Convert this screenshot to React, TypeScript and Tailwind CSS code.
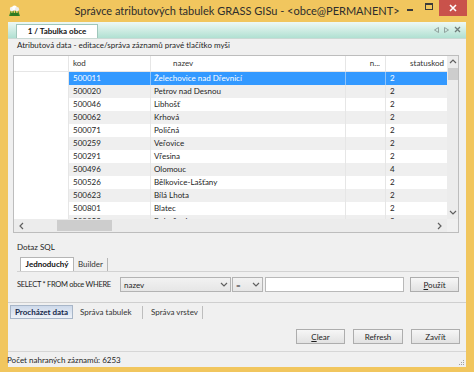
import React from "react";

const rows: [string, string, string][] = [
  ["500011", "Želechovice nad Dřevnicí", "2"],
  ["500020", "Petrov nad Desnou", "2"],
  ["500046", "Libhošť", "2"],
  ["500062", "Krhová", "2"],
  ["500071", "Poličná", "2"],
  ["500259", "Veřovice", "2"],
  ["500291", "Vřesina", "2"],
  ["500496", "Olomouc", "4"],
  ["500526", "Bělkovice-Lašťany", "2"],
  ["500623", "Bílá Lhota", "2"],
  ["500801", "Blatec", "2"],
  ["500852", "Bohuňovice", "2"],
];

function Chevron({ dir, className }: { dir: "up" | "down" | "left" | "right"; className?: string }) {
  const pts: Record<string, string> = {
    up: "1,5 4,2 7,5",
    down: "1,2 4,5 7,2",
    left: "5,1 2,4 5,7",
    right: "3,1 6,4 3,7",
  };
  return (
    <svg width="8" height="8" viewBox="0 0 8 8" className={className}>
      <polyline points={pts[dir]} fill="none" stroke="#606060" strokeWidth="1.2" />
    </svg>
  );
}

function GrassIcon() {
  return (
    <svg width="13" height="12" viewBox="0 0 13 12">
      <path d="M1 11 L3 5 L4 11 L5 3 L6.5 11 L7.5 4 L9 11 L10 5 L12 11 Z" fill="#3f8f2c" />
      <circle cx="4" cy="4" r="2.2" fill="#f4f4f4" />
      <circle cx="6.5" cy="3" r="2.4" fill="#ffffff" />
      <circle cx="9" cy="4.2" r="2.1" fill="#eeeeee" />
      <path d="M2 11 L11 11 L10 8 L3 8 Z" fill="#2f7a22" />
    </svg>
  );
}

function Btn({ children, w }: { children: React.ReactNode; w: string }) {
  return (
    <div
      className={`${w} h-[15px] bg-linear-to-b from-[#f6f6f6] to-[#e2e2e2] border border-[#adadad] flex items-center justify-center text-[#1e1e1e]`}
    >
      {children}
    </div>
  );
}

export default function App() {
  return (
    <div className="w-[474px] h-[372px] bg-[#f1c65e] flex flex-col font-['Lato',sans-serif] text-[8px] text-[#1e1e1e] overflow-hidden">
      {/* Title bar */}
      <div className="h-[22px] shrink-0 grid grid-cols-[1fr_auto_1fr]">
        <div className="pl-[8px] pt-[5px]">
          <GrassIcon />
        </div>
        <div className="text-[11px] leading-[22px] text-[#2d2d2d] whitespace-nowrap">
          Správce atributových tabulek GRASS GISu - &lt;obce@PERMANENT&gt;
        </div>
        <div className="flex justify-end items-start pr-[7px]">
          <div className="w-[17px] h-[16px] flex items-center justify-center">
            <div className="w-[6px] h-[2px] bg-[#3a3a3a] mt-[4px]" />
          </div>
          <div className="w-[21px] h-[16px] flex items-center justify-center">
            <div className="w-[8px] h-[7px] border border-[#3a3a3a] border-t-2 -mt-[3px]" />
          </div>
          <div className="w-[28px] h-[16px] bg-[#c9524b] flex items-center justify-center">
            <svg width="8" height="8" viewBox="0 0 8 8">
              <path d="M1 1 L7 7 M7 1 L1 7" stroke="#ffffff" strokeWidth="1.6" />
            </svg>
          </div>
        </div>
      </div>

      {/* Client area */}
      <div className="mx-[8px] h-[345px] shrink-0 bg-[#f0f0f0] flex flex-col">
        {/* top notebook tab bar */}
        <div className="h-[16px] shrink-0 bg-linear-to-b from-[#eef8f5] to-[#b0e0d2] flex items-end justify-between pl-[8px] pr-[5px]">
          <div className="w-[82px] h-[14px] bg-white border-x border-t border-[#9fc6bb] font-bold text-center leading-[13px] text-[#111]">
            1 / Tabulka obce
          </div>
          <div className="self-center flex items-center gap-[5px] pb-[1px]">
            <svg width="5" height="6" viewBox="0 0 5 6">
              <polygon points="4.5,0.5 0.5,3 4.5,5.5" fill="none" stroke="#8a9a96" strokeWidth="0.9" />
            </svg>
            <svg width="5" height="6" viewBox="0 0 5 6">
              <polygon points="0.5,0.5 4.5,3 0.5,5.5" fill="none" stroke="#8a9a96" strokeWidth="0.9" />
            </svg>
            <svg width="7" height="7" viewBox="0 0 7 7">
              <path d="M1 1 L6 6 M6 1 L1 6" stroke="#6f7d7a" strokeWidth="1.3" />
            </svg>
          </div>
        </div>

        {/* page */}
        <div className="h-[265px] shrink-0 flex flex-col border-t border-[#c9d9d4] border-b border-b-[#cfcfcf]">
          <div className="h-[16px] shrink-0 pl-[9px] leading-[13px] whitespace-nowrap">
            Atributová data - editace/správa záznamů pravé tlačítko myši
          </div>

          {/* table */}
          <div className="ml-[5px] mr-[7px] h-[178px] shrink-0 border border-[#bdbdbd] bg-white flex flex-col">
            <div className="flex h-[163px] shrink-0">
              <div className="w-[433px] flex flex-col overflow-hidden">
                <div className="grid grid-cols-[54px_82px_195px_40px_62px] h-[16px] shrink-0 border-b border-[#e6e6e6] text-[#333] leading-[15px]">
                  <div />
                  <div className="border-l border-[#e6e6e6] pl-[4px]">kod</div>
                  <div className="border-l border-[#e6e6e6] pl-[22px]">nazev</div>
                  <div className="border-l border-[#e6e6e6] pr-[5px] text-right">n...</div>
                  <div className="border-l border-[#e6e6e6] pr-[3px] text-right">statuskod</div>
                </div>
                {rows.map((r, i) => {
                  const sel = i === 0;
                  const bg = sel ? "bg-[#3399ff] text-white" : i % 2 === 1 ? "bg-[#efefef]" : "bg-white";
                  const bd = sel ? "border-[#8fc4fa]" : "border-[#e6e6e6]";
                  return (
                    <div
                      key={r[0]}
                      className="grid grid-cols-[54px_82px_195px_40px_62px] h-[13px] shrink-0 leading-[13px] whitespace-nowrap"
                    >
                      <div className="bg-white" />
                      <div className={`${bg} border-l border-[#e6e6e6] pl-[4px]`}>{r[0]}</div>
                      <div className={`${bg} border-l ${bd} pl-[3px] overflow-hidden`}>{r[1]}</div>
                      <div className={`${bg} border-l ${bd}`} />
                      <div className={`${bg} border-l ${bd} pl-[4px]`}>{r[2]}</div>
                    </div>
                  );
                })}
              </div>
              {/* vertical scrollbar */}
              <div className="w-[11px] bg-[#ececec] flex flex-col items-center">
                <div className="h-[12px] flex items-center justify-center">
                  <Chevron dir="up" />
                </div>
                <div className="w-[10px] h-[12px] bg-[#cdcdcd]" />
                <div className="flex-1" />
                <div className="h-[12px] flex items-center justify-center">
                  <Chevron dir="down" />
                </div>
              </div>
            </div>
            {/* horizontal scrollbar */}
            <div className="h-[13px] shrink-0 flex">
              <div className="w-[433px] bg-[#ececec] flex items-center">
                <div className="w-[12px] flex justify-center ml-[2px]">
                  <Chevron dir="left" />
                </div>
                <div className="ml-[29px] w-[55px] h-[11px] bg-[#cdcdcd]" />
                <div className="flex-1" />
                <div className="w-[12px] flex justify-center mr-[2px]">
                  <Chevron dir="right" />
                </div>
              </div>
              <div className="w-[11px] bg-[#f0f0f0]" />
            </div>
          </div>

          {/* Dotaz SQL */}
          <div className="mt-[7px] h-[14px] shrink-0 pl-[9px] leading-[14px]">Dotaz SQL</div>
          <div className="mt-[3px] ml-[9px] mr-[7px] h-[15px] shrink-0 flex items-end pl-[3px] border-b border-[#d2d2d2]">
            <div className="w-[54px] h-[14px] bg-white border-x border-t border-[#b5b5b5] font-bold text-center leading-[13px] text-[#111]">
              Jednoduchý
            </div>
            <div className="h-[13px] px-[4px] border-r border-[#b5b5b5] leading-[13px] text-[#333]">Builder</div>
          </div>
          <div className="mt-[5px] h-[15px] shrink-0 flex items-center pl-[9px] pr-[7px]">
            <div className="w-[103px] whitespace-nowrap text-[7.5px] tracking-[-0.3px]">SELECT * FROM obce WHERE</div>
            <div className="w-[111px] h-[15px] bg-linear-to-b from-[#f2f2f2] to-[#e6e6e6] border border-[#b3b3b3] flex items-center justify-between pl-[3px] pr-[2px]">
              <span>nazev</span>
              <Chevron dir="down" />
            </div>
            <div className="ml-[1px] w-[31px] h-[15px] bg-linear-to-b from-[#f2f2f2] to-[#e6e6e6] border border-[#b3b3b3] flex items-center justify-between pl-[3px] pr-[2px]">
              <span>=</span>
              <Chevron dir="down" />
            </div>
            <div className="ml-[2px] w-[139px] h-[15px] bg-white border border-[#b9b9b9]" />
            <div className="ml-[6px]">
              <Btn w="w-[49px]">
                <span>
                  <span className="underline">P</span>oužít
                </span>
              </Btn>
            </div>
          </div>
          <div className="flex-1" />
        </div>

        {/* bottom notebook tabs */}
        <div className="h-[18px] shrink-0 flex items-start pl-[2px]">
          <div className="mt-[2px] w-[63px] h-[14px] bg-linear-to-b from-[#cdd9ea] to-[#eef2f8] border border-[#a8b6c8] font-bold text-[#16284a] text-center leading-[12px]">
            Procházet data
          </div>
          <div className="mt-[3px] h-[13px] pl-[7px] w-[70px] border-r border-[#bdbdbd] leading-[12px] text-[#333]">
            Správa tabulek
          </div>
          <div className="mt-[3px] h-[13px] pl-[8px] w-[60px] border-r border-[#bdbdbd] leading-[12px] text-[#333]">
            Správa vrstev
          </div>
        </div>

        {/* buttons */}
        <div className="mt-[8px] h-[15px] shrink-0 flex justify-end gap-[8px] pr-[6px]">
          <Btn w="w-[49px]">
            <span>
              <span className="underline">C</span>lear
            </span>
          </Btn>
          <Btn w="w-[50px]">Refresh</Btn>
          <Btn w="w-[49px]">Zavřít</Btn>
        </div>

        {/* status bar */}
        <div className="mt-[7px] h-[16px] shrink-0 border-t border-[#d6d6d6] flex items-center justify-between">
          <div className="-ml-[1px] leading-[14px] whitespace-nowrap">Počet nahraných záznamů: 6253</div>
          <svg width="6" height="6" viewBox="0 0 6 6" className="self-end mb-[1px] mr-[1px]">
            <rect x="4" y="0" width="1" height="1" fill="#a0a0a0" />
            <rect x="2" y="2" width="1" height="1" fill="#a0a0a0" />
            <rect x="4" y="2" width="1" height="1" fill="#a0a0a0" />
            <rect x="0" y="4" width="1" height="1" fill="#a0a0a0" />
            <rect x="2" y="4" width="1" height="1" fill="#a0a0a0" />
            <rect x="4" y="4" width="1" height="1" fill="#a0a0a0" />
          </svg>
        </div>
      </div>
    </div>
  );
}
